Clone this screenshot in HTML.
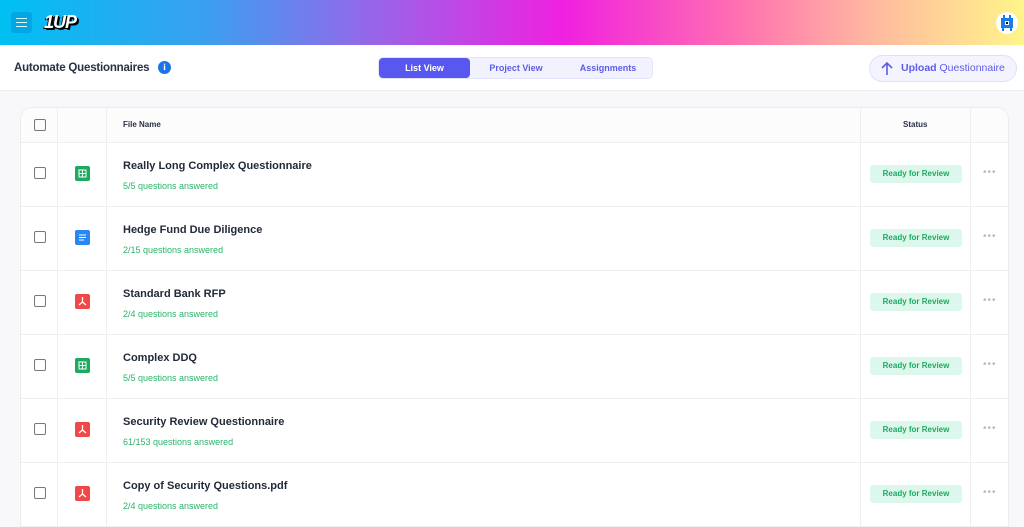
<!DOCTYPE html>
<html><head><style>
*{box-sizing:border-box;margin:0;padding:0}
body{width:1024px;height:527px;overflow:hidden;font-family:"Liberation Sans",sans-serif;background:#f8f8fa;position:relative}
.hdr{position:absolute;left:0;top:0;width:1024px;height:45px;background:linear-gradient(90deg,#00c0f2 0%,#3aa0f0 20%,#a060e8 38%,#f020e0 55%,#ff70b0 72%,#ffb8a0 85%,#fff58a 100%)}
.menu{position:absolute;left:11px;top:12px;width:21px;height:21px;background:rgba(0,150,220,.6);border-radius:3px}
.menu i{position:absolute;left:5px;width:11px;height:1px;background:#dff}
.logo{position:absolute;left:44px;top:12px;font:italic 900 18px "Liberation Sans";color:#fff;letter-spacing:-1px;text-shadow:1px 1px 0 #000,-1px 1px 0 #000,2px 2px 0 #000}
.sub{position:absolute;top:45px;left:0;width:1024px;height:46px;background:#fff;border-bottom:1px solid #eceef2}
.title{position:absolute;left:14px;top:62px;font-weight:bold;font-size:11.5px;color:#2a3042;letter-spacing:-.2px}
.info{position:absolute;left:158px;top:61px;width:13px;height:13px;border-radius:50%;background:#1a73e8;color:#fff;font:bold 9px "Liberation Serif";text-align:center;line-height:13px}
.tabs{position:absolute;left:378px;top:57px;width:275px;height:22px;border:1px solid #e3e4fb;background:#f2f2fe;border-radius:5px;font-size:9px;font-weight:bold;color:#5c5ce8}
.tabs span{position:absolute;top:0;height:20px;line-height:20px;text-align:center}
.tabs .a{left:0;width:91px;background:#5858f0;color:#fff;border-radius:4px}
.up{position:absolute;left:869px;top:55px;width:148px;height:27px;border:1px solid #e0e0fa;background:#f4f4fe;border-radius:14px;font-size:10.5px;color:#5c5ce8;line-height:25px;padding-left:31px}
.up svg{position:absolute;left:11px;top:6px}
.card{position:absolute;left:20px;top:107px;width:989px;height:420px;background:#fff;border:1px solid #ececf0;border-bottom:none;border-radius:12px 12px 0 0;overflow:hidden}
.vl{position:absolute;top:0;bottom:0;width:1px;background:#efeff2}
.row{position:absolute;left:0;width:989px;height:64px;border-top:1px solid #efeff2}
.th{position:absolute;left:0;top:0;width:989px;height:34px;background:#fcfcfd;font-size:8px;font-weight:bold;color:#2a3042}
.cb{position:absolute;left:13px;width:12px;height:12px;border:1.5px solid #777;border-radius:2px}
.ic{position:absolute;left:54px;top:23px;width:15px;height:15px;border-radius:2px}
.nm{position:absolute;left:102px;top:17px;font-size:11px;font-weight:bold;color:#222a3a}
.qa{position:absolute;left:102px;top:38px;font-size:9px;color:#28b46a}
.st{position:absolute;left:849px;top:22px;width:92px;height:18px;background:#dcf8ec;border-radius:3px;color:#1eaa5e;font-size:8px;font-weight:bold;text-align:center;line-height:18px}
.dots{position:absolute;left:962px;top:24px;color:#bbb;font-size:10px;letter-spacing:1px}
</style></head><body>
<div class="hdr">
<div class="menu"><i style="top:6px"></i><i style="top:10px"></i><i style="top:14px"></i></div>
<div class="logo">1UP</div>
<svg style="position:absolute;left:996px;top:12px" width="22" height="22" viewBox="0 0 22 22"><circle cx="11" cy="11" r="11" fill="#fff"/><rect x="5" y="6" width="12" height="10" fill="#1a7ae8"/><rect x="9" y="9" width="4" height="4" fill="#fff"/><rect x="10" y="10" width="2" height="2" fill="#111"/><rect x="7" y="3" width="2" height="3" fill="#1a7ae8"/><rect x="13" y="3" width="2" height="3" fill="#1a7ae8"/><rect x="6" y="16" width="2" height="3" fill="#1a7ae8"/><rect x="14" y="16" width="2" height="3" fill="#1a7ae8"/></svg>
</div>
<div class="sub"></div>
<div class="title">Automate Questionnaires</div>
<div class="info">i</div>
<div class="tabs"><span class="a">List View</span><span style="left:91px;width:92px">Project View</span><span style="left:183px;width:92px">Assignments</span></div>
<div class="up"><svg width="12" height="14" viewBox="0 0 12 14"><path d="M6 13V1M1 6l5-5 5 5" stroke="#5c5ce8" stroke-width="1.6" fill="none"/></svg><b>Upload</b> Questionnaire</div>
<div class="card">
<div class="th"><div class="cb" style="top:11px"></div><span style="position:absolute;left:102px;top:12px">File Name</span><span style="position:absolute;left:882px;top:12px">Status</span></div>
<div class="vl" style="left:36px"></div><div class="vl" style="left:85px"></div><div class="vl" style="left:839px"></div><div class="vl" style="left:949px"></div>
<div class="row" style="top:34px"><div class="cb" style="top:24px"></div><div class="ic" style="background:#1eaa5e"><svg width="15" height="15"><rect x="4" y="4" width="7" height="7" fill="none" stroke="#fff" stroke-width="1"/><path d="M7.5 4v7M4 7.5h7" stroke="#fff"/></svg></div><div class="nm">Really Long Complex Questionnaire</div><div class="qa">5/5 questions answered</div><div class="st">Ready for Review</div><div class="dots">•••</div></div>
<div class="row" style="top:98px"><div class="cb" style="top:24px"></div><div class="ic" style="background:#2a86f0"><svg width="15" height="15"><path d="M4 5h7M4 7.5h7M4 10h5" stroke="#fff"/></svg></div><div class="nm">Hedge Fund Due Diligence</div><div class="qa">2/15 questions answered</div><div class="st">Ready for Review</div><div class="dots">•••</div></div>
<div class="row" style="top:162px"><div class="cb" style="top:24px"></div><div class="ic" style="background:#f04848"><svg width="15" height="15"><path d="M7.5 3v5M7.5 8l-3.5 3M7.5 8l3.5 3" stroke="#fff" stroke-width="1.3" fill="none"/></svg></div><div class="nm">Standard Bank RFP</div><div class="qa">2/4 questions answered</div><div class="st">Ready for Review</div><div class="dots">•••</div></div>
<div class="row" style="top:226px"><div class="cb" style="top:24px"></div><div class="ic" style="background:#1eaa5e"><svg width="15" height="15"><rect x="4" y="4" width="7" height="7" fill="none" stroke="#fff" stroke-width="1"/><path d="M7.5 4v7M4 7.5h7" stroke="#fff"/></svg></div><div class="nm">Complex DDQ</div><div class="qa">5/5 questions answered</div><div class="st">Ready for Review</div><div class="dots">•••</div></div>
<div class="row" style="top:290px"><div class="cb" style="top:24px"></div><div class="ic" style="background:#f04848"><svg width="15" height="15"><path d="M7.5 3v5M7.5 8l-3.5 3M7.5 8l3.5 3" stroke="#fff" stroke-width="1.3" fill="none"/></svg></div><div class="nm">Security Review Questionnaire</div><div class="qa">61/153 questions answered</div><div class="st">Ready for Review</div><div class="dots">•••</div></div>
<div class="row" style="top:354px"><div class="cb" style="top:24px"></div><div class="ic" style="background:#f04848"><svg width="15" height="15"><path d="M7.5 3v5M7.5 8l-3.5 3M7.5 8l3.5 3" stroke="#fff" stroke-width="1.3" fill="none"/></svg></div><div class="nm">Copy of Security Questions.pdf</div><div class="qa">2/4 questions answered</div><div class="st">Ready for Review</div><div class="dots">•••</div></div>
<div class="row" style="top:418px"></div>
</div>
</body></html>
